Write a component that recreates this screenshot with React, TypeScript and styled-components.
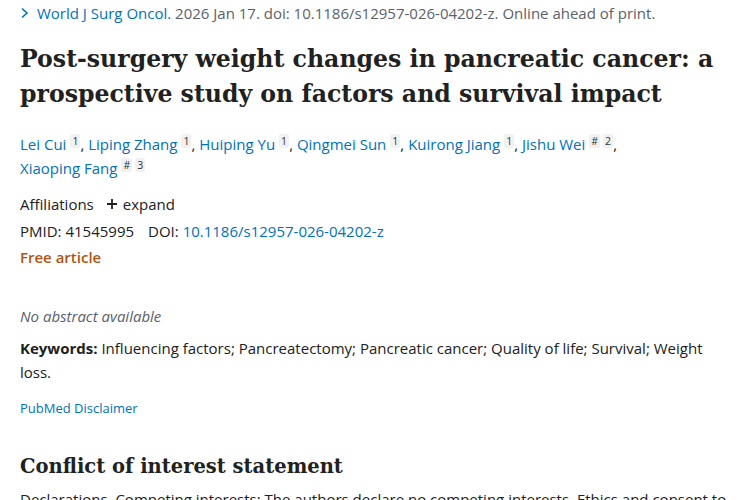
import React from "react";
import styled, { createGlobalStyle } from "styled-components";

const GlobalStyle = createGlobalStyle`
  html, body {
    margin: 0;
    padding: 0;
    background: #ffffff;
    overflow: hidden;
  }
  body {
    font-family: "Open Sans", "Noto Sans", sans-serif;
    color: #212121;
  }
`;

const Page = styled.main`
  width: 750px;
  height: 500px;
  padding: 0 20px;
  box-sizing: border-box;
  overflow: hidden;
`;

const Citation = styled.div`
  display: flex;
  align-items: center;
  gap: 8px;
  height: 25px;
  font-size: 15px;
  color: #5b616b;
  white-space: nowrap;
`;

const Journal = styled.a`
  color: #0071bc;
  text-decoration: none;
`;

const Chevron = styled.svg`
  width: 9px;
  height: 12px;
  flex: none;
`;

const Title = styled.h1`
  margin: 17px 0 20px;
  font-family: "DejaVu Serif", "Liberation Serif", serif;
  font-weight: 700;
  font-size: 23.6px;
  line-height: 35px;
  color: #212121;
  letter-spacing: 0;
`;

const Authors = styled.div`
  font-size: 15px;
  line-height: 24px;
  color: #212121;
`;

const Author = styled.a`
  color: #0071bc;
  text-decoration: none;
`;

const Sup = styled.sup`
  display: inline-block;
  margin-left: 4px;
  padding: 0 2px;
  background: #f1f1f1;
  border-radius: 2px;
  font-size: 10.5px;
  line-height: 14px;
  vertical-align: 5px;
  color: #333333;
  & + & {
    margin-left: 3px;
  }
`;

const Meta = styled.div`
  display: flex;
  flex-direction: column;
  margin-top: 11px;
  font-size: 15px;
  line-height: 26.5px;
`;

const MetaRow = styled.div<{ $gap?: number }>`
  display: flex;
  align-items: center;
  gap: ${(p) => p.$gap ?? 10}px;
`;

const Expand = styled.span`
  display: inline-flex;
  align-items: center;
  gap: 5px;
`;

const Link = styled.a`
  color: #0071bc;
  text-decoration: none;
`;

const Free = styled.div`
  color: #b05412;
  font-weight: 600;
`;

const NoAbstract = styled.p`
  margin: 33px 0 0;
  font-style: italic;
  color: #5b616b;
  font-size: 15px;
  line-height: 24px;
`;

const Keywords = styled.p`
  margin: 8px 0 0;
  font-size: 15px;
  line-height: 24px;
  b {
    font-weight: 700;
  }
`;

const Disclaimer = styled.a`
  display: block;
  margin-top: 12px;
  font-size: 13px;
  line-height: 24px;
  color: #0071bc;
  text-decoration: none;
`;

const Heading = styled.h2`
  margin: 30px 0 0;
  font-family: "DejaVu Serif", "Liberation Serif", serif;
  font-weight: 700;
  font-size: 19.5px;
  line-height: 34px;
  color: #212121;
`;

const Body = styled.p`
  margin: 3px 0 0;
  font-size: 15px;
  line-height: 24px;
  white-space: nowrap;
`;

const authors: [string, string[]][] = [
  ["Lei Cui", ["1"]],
  ["Liping Zhang", ["1"]],
  ["Huiping Yu", ["1"]],
  ["Qingmei Sun", ["1"]],
  ["Kuirong Jiang", ["1"]],
  ["Jishu Wei", ["#", "2"]],
  ["Xiaoping Fang", ["#", "3"]],
];

export default function App() {
  return (
    <>
      <GlobalStyle />
      <Page>
        <Citation>
          <Chevron viewBox="0 0 9 12">
            <path d="M2 1.5 L7 6 L2 10.5" fill="none" stroke="#0071bc" strokeWidth="1.6" />
          </Chevron>
          <span>
            <Journal>World J Surg Oncol.</Journal> 2026 Jan 17. doi:
            10.1186/s12957-026-04202-z. Online ahead of print.
          </span>
        </Citation>

        <Title>
          Post-surgery weight changes in pancreatic cancer: a prospective
          study on factors and survival impact
        </Title>

        <Authors>
          {authors.map(([name, marks], i) => (
            <React.Fragment key={name}>
              <Author>{name}</Author>
              {marks.map((m) => (
                <Sup key={m}>{m}</Sup>
              ))}
              {i < authors.length - 1 ? ", " : ""}
              {i === 5 && <br />}
            </React.Fragment>
          ))}
        </Authors>

        <Meta>
          <MetaRow $gap={12}>
            <span>Affiliations</span>
            <Expand>
              <svg width="12" height="12" viewBox="0 0 12 12">
                <path d="M6 1v10M1 6h10" stroke="#212121" strokeWidth="1.8" />
              </svg>
              expand
            </Expand>
          </MetaRow>
          <MetaRow $gap={14}>
            <span>PMID: 41545995</span>
            <span>
              DOI: <Link>10.1186/s12957-026-04202-z</Link>
            </span>
          </MetaRow>
          <Free>Free article</Free>
        </Meta>

        <NoAbstract>No abstract available</NoAbstract>

        <Keywords>
          <b>Keywords:</b> Influencing factors; Pancreatectomy; Pancreatic
          cancer; Quality of life; Survival; Weight loss.
        </Keywords>

        <Disclaimer>PubMed Disclaimer</Disclaimer>

        <Heading>Conflict of interest statement</Heading>

        <Body>
          Declarations. Competing interests: The authors declare no competing
          interests. Ethics and consent to
        </Body>
      </Page>
    </>
  );
}
